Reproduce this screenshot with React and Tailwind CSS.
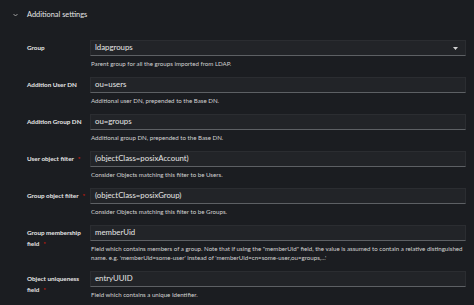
import React from 'react';

const rows = [
  { label: ['Group'], value: 'ldapgroups', help: ['Parent group for all the groups imported from LDAP.'], select: true },
  { label: ['Addition User DN'], value: 'ou=users', help: ['Additional user DN, prepended to the Base DN.'] },
  { label: ['Addition Group DN'], value: 'ou=groups', help: ['Additional group DN, prepended to the Base DN.'] },
  { label: ['User object filter'], required: true, value: '(objectClass=posixAccount)', help: ['Consider Objects matching this filter to be Users.'] },
  { label: ['Group object filter'], required: true, value: '(objectClass=posixGroup)', help: ['Consider Objects matching this filter to be Groups.'] },
  {
    label: ['Group membership', 'field'],
    required: true,
    value: 'memberUid',
    help: [
      'Field which contains members of a group. Note that if using the "memberUid" field, the value is assumed to contain a relative distinguished',
      "name. e.g. 'memberUid=some-user' instead of 'memberUid=cn=some-user,ou=groups,...'",
    ],
  },
  { label: ['Object uniqueness', 'field'], required: true, value: 'entryUUID', help: ['Field which contains a unique Identifier.'] },
];

const Field = ({ row }) => (
  <div className="flex">
    <div className="w-[63px] shrink-0 pt-[2px] text-[6.3px] font-bold leading-[11px] text-[#e6e6e6] whitespace-nowrap">
      {row.label.map((l, i) => (
        <div key={i}>
          {l}
          {row.required && i === row.label.length - 1 && <span className="ml-[4px] text-[#c9190b]">*</span>}
        </div>
      ))}
    </div>
    <div className="flex-1 min-w-0">
      <div className="relative h-[16px] bg-[#222428] border border-[#2b2d31] border-b-[#5d6064] flex items-center pl-[4px] text-[7.8px] text-[#e6e6e6]">
        {row.value}
        {row.select && (
          <svg className="absolute right-[7px] top-[6px]" width="5" height="3" viewBox="0 0 10 6">
            <path d="M0 0h10L5 6z" fill="#d2d2d2" />
          </svg>
        )}
      </div>
      <div className="mt-[3px] pl-[1px] text-[6.15px] leading-[9px] text-[#d2d2d2]">
        {row.help.map((h, i) => (
          <div key={i} className="whitespace-nowrap">{h}</div>
        ))}
      </div>
    </div>
  </div>
);

export default function App() {
  return (
    <div className="w-[474px] h-[305px] overflow-hidden bg-[#1b1d21] font-['Lato',sans-serif]">
      <div className="flex items-center h-[12px] mt-[9px] pl-[13px]">
        <svg width="5" height="4" viewBox="0 0 10 6" className="mr-[9px]">
          <path d="M1 1l4 4 4-4" stroke="#bdbdbd" strokeWidth="1.6" fill="none" />
        </svg>
        <span className="text-[7.4px] text-[#e6e6e6]">Additional settings</span>
      </div>
      <div className="mt-[19px] pl-[27px] pr-[8px] flex flex-col gap-[9px]">
        {rows.map((r, i) => (
          <Field key={i} row={r} />
        ))}
      </div>
    </div>
  );
}
